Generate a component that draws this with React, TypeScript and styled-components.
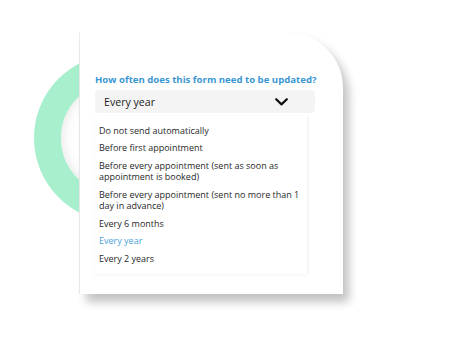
import React from 'react';
import styled, { createGlobalStyle } from 'styled-components';

const GlobalStyle = createGlobalStyle`
  html, body {
    margin: 0;
    padding: 0;
    background: #ffffff;
  }
  body {
    font-family: "Open Sans", "Noto Sans", sans-serif;
  }
`

const Scene = styled.div`
  position: relative;
  width: 474px;
  height: 338px;
  padding: 32px 0 0 80px;
  box-sizing: border-box;
  overflow: hidden;
`

const Ring = styled.div`
  position: absolute;
  left: 34px;
  top: 54px;
  width: 114px;
  height: 114px;
  border: 27px solid #a8f0cd;
  border-radius: 50%;
  box-shadow: inset 0 0 14px rgba(0, 0, 0, 0.12);
`

const Card = styled.div`
  position: relative;
  width: 263px;
  height: 262px;
  box-sizing: border-box;
  padding: 40px 28px 0 15px;
  background: #ffffff;
  border-top-right-radius: 56px;
  box-shadow: 6px 8px 10px rgba(0, 0, 0, 0.24), -1px 0 0 #ececec;
`

const Title = styled.div`
  color: #3a97d4;
  font-size: 9.6px;
  font-weight: 700;
  line-height: 15px;
  white-space: nowrap;
`

const SelectBox = styled.div`
  margin-top: 3px;
  height: 23px;
  display: flex;
  align-items: center;
  justify-content: space-between;
  padding: 0 27px 0 9px;
  background: #f4f4f4;
  border-radius: 4px;
  font-size: 10.6px;
  color: #222222;
`

const Options = styled.ul`
  list-style: none;
  margin: 3px 7px 0 0;
  padding: 6px 0 7px 4px;
  background: #ffffff;
  box-shadow: 0 1px 3px rgba(0, 0, 0, 0.05);
  border-right: 1px solid #f2f2f2;
`

const Option = styled.li<{ $active?: boolean }>`
  padding: 3px 0;
  font-size: 9px;
  line-height: 11.45px;
  color: ${p => (p.$active ? '#4aa0db' : '#1f1f1f')};
  max-width: 202px;
`

const options = [
  'Do not send automatically',
  'Before first appointment',
  'Before every appointment (sent as soon as appointment is booked)',
  'Before every appointment (sent no more than 1 day in advance)',
  'Every 6 months',
  'Every year',
  'Every 2 years',
]

const Chevron = () => (
  <svg width="13" height="8" viewBox="0 0 13 8">
    <path d="M1.2 1.2 L6.5 6.4 L11.8 1.2" fill="none" stroke="#111" strokeWidth="2.2" strokeLinecap="round" strokeLinejoin="round" />
  </svg>
)

export default function App() {
  const selected = 'Every year'
  return (
    <Scene>
      <GlobalStyle />
      <Ring />
      <Card>
        <Title>How often does this form need to be updated?</Title>
        <SelectBox>
          <span>{selected}</span>
          <Chevron />
        </SelectBox>
        <Options>
          {options.map(o => (
            <Option key={o} $active={o === selected}>{o}</Option>
          ))}
        </Options>
      </Card>
    </Scene>
  )
}
